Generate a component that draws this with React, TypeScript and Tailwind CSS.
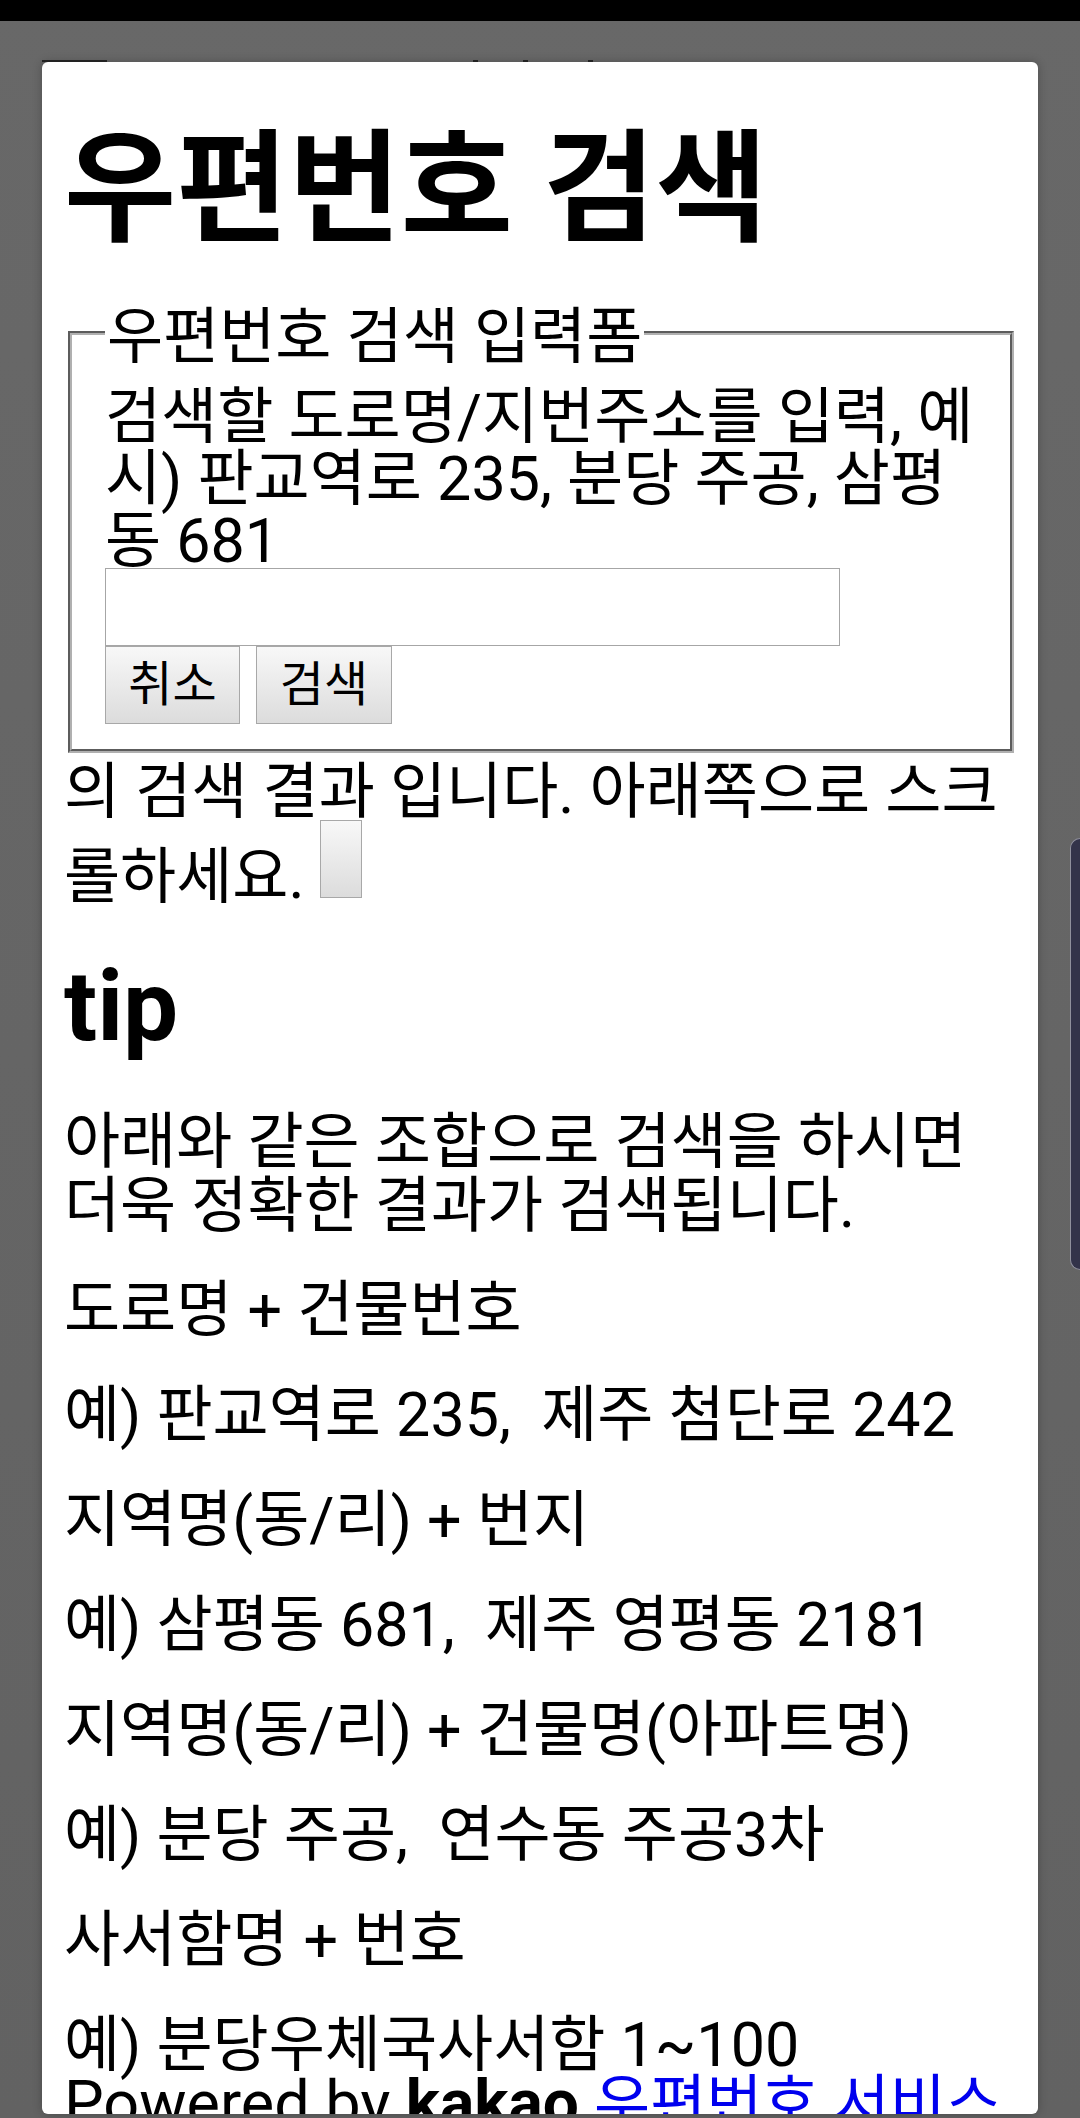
import type { ReactNode } from 'react'

const tips: string[] = [
  '도로명 + 건물번호',
  '예) 판교역로 235,  제주 첨단로 242',
  '지역명(동/리) + 번지',
  '예) 삼평동 681,  제주 영평동 2181',
  '지역명(동/리) + 건물명(아파트명)',
  '예) 분당 주공,  연수동 주공3차',
  '사서함명 + 번호',
  '예) 분당우체국사서함 1~100',
]

const Line = ({ children }: { children: ReactNode }) => (
  <span className="block whitespace-pre">{children}</span>
)

const GrayButton = ({ label, width }: { label: string; width: string }) => (
  <button
    type="button"
    className={`${width} h-[78px] border border-[#a8a8a8] bg-gradient-to-b from-[#f8f8f8] to-[#dcdcdc] text-center text-[48px] leading-[60px] text-black`}
  >
    {label}
  </button>
)

export default function App() {
  return (
    <div className="relative h-[2118px] w-[1080px] overflow-hidden bg-gradient-to-b from-[#686868] to-[#626262] font-['Roboto','Noto_Sans_CJK_KR',sans-serif] text-black">
      {/* status bar */}
      <div className="h-[21px] bg-black" />

      {/* page behind the dimmed overlay, just peeking over the layer */}
      <div className="absolute left-[42px] top-[60px] h-[2px] w-[65px] bg-[#222]" />
      <div className="absolute left-[473px] top-[60px] h-[2px] w-[5px] bg-[#222]" />
      <div className="absolute left-[523px] top-[60px] h-[2px] w-[5px] bg-[#222]" />
      <div className="absolute left-[588px] top-[60px] h-[2px] w-[5px] bg-[#222]" />

      {/* postcode layer */}
      <div className="mx-[42px] mt-[41px] h-[2052px] overflow-hidden rounded-[6px] bg-white px-[22px] pt-[63px] shadow-[0_0_10px_rgba(0,0,0,0.25)]">
        <h1 className="text-[122px] font-bold leading-[130px]">우편번호 검색</h1>

        <fieldset className="mt-[44px] ml-[4px] mr-[2px] border-[4px] border-[#b0b0b0] px-[33px] pb-[25px] [border-style:groove]">
          <legend className="px-[2px] pt-[8px] text-[61px] leading-[60px]">우편번호 검색 입력폼</legend>
          <label className="mt-[19px] block text-[61px] leading-[62px]">
            <Line>검색할 도로명/지번주소를 입력, 예</Line>
            <Line>시) 판교역로 235, 분당 주공, 삼평</Line>
            <Line>동 681</Line>
          </label>
          <input
            type="text"
            className="mt-[-4px] block h-[78px] w-[735px] border border-[#a6a6a6] bg-white px-2 text-[48px] outline-none"
          />
          <div className="flex gap-[16px]">
            <GrayButton label="취소" width="w-[135px]" />
            <GrayButton label="검색" width="w-[136px]" />
          </div>
        </fieldset>

        <p className="mt-[11px] text-[61px] leading-[56px]">
          <Line>의 검색 결과 입니다. 아래쪽으로 스크</Line>
          <span className="block whitespace-pre">
            롤하세요.{' '}
            <span className="inline-block h-[78px] w-[42px] border border-[#a8a8a8] bg-gradient-to-b from-[#f8f8f8] to-[#dcdcdc] align-baseline" />
          </span>
        </p>

        <h2 className="mt-[46px] text-[98px] font-bold leading-[112px]">tip</h2>

        <p className="mt-[47px] text-[61px] leading-[64px]">
          <Line>아래와 같은 조합으로 검색을 하시면</Line>
          <Line>더욱 정확한 결과가 검색됩니다.</Line>
        </p>

        <div className="mt-[41px] flex flex-col gap-[42px]">
          {tips.map((tip, i) => (
            <p key={`tip-${i}`} className="whitespace-pre text-[61px] leading-[63px]">
              {tip}
            </p>
          ))}
        </div>

        <div className="mt-[-5px] whitespace-pre text-[61px] leading-[63px]">
          <span className="text-[63px]">Powered by </span>
          <b className="text-[64px] font-bold">kakao</b>{' '}
          <a href="#" className="text-[#0000ee]">
            우편번호 서비스
          </a>
        </div>
      </div>

      {/* edge panel handle */}
      <div className="absolute right-0 top-[838px] h-[432px] w-[10px] rounded-l-[12px] border border-r-0 border-[#8f8f9c] bg-[#33334a]" />
    </div>
  )
}
